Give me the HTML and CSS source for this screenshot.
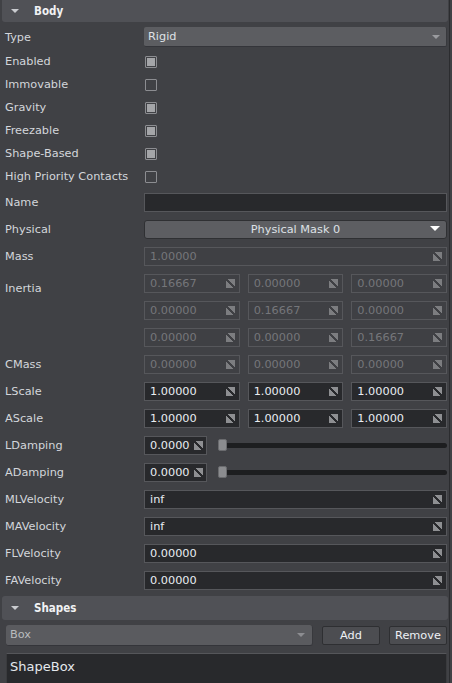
FILE: index.html
```html
<!DOCTYPE html>
<html>
<head>
<meta charset="utf-8">
<link rel="stylesheet" href="styles.css">
</head>
<body>
<div class="panel">
  <div class="section-header header-body"><span class="caret"></span>Body</div>

  <div class="row row-combo">
    <span class="label">Type</span>
    <div class="combo">Rigid<span class="combo-arrow"></span></div>
  </div>

  <div class="checks">
    <div class="row row-check"><span class="label">Enabled</span><span class="check on"></span></div>
    <div class="row row-check"><span class="label">Immovable</span><span class="check"></span></div>
    <div class="row row-check"><span class="label">Gravity</span><span class="check on"></span></div>
    <div class="row row-check"><span class="label">Freezable</span><span class="check on"></span></div>
    <div class="row row-check"><span class="label">Shape-Based</span><span class="check on"></span></div>
    <div class="row row-check"><span class="label">High Priority Contacts</span><span class="check"></span></div>
  </div>

  <div class="fields">
    <div class="row row-field"><span class="label">Name</span><div class="field edit"></div></div>
    <div class="row row-field"><span class="label">Physical</span><div class="dropbtn">Physical Mask 0<span class="white-arrow"></span></div></div>
    <div class="row row-field"><span class="label">Mass</span><div class="field disabled"><span class="val">1.00000</span><span class="spin"></span></div></div>
    <div class="row row-field"><span class="label label-low">Inertia</span>
      <div class="triple">
        <div class="field disabled"><span class="val">0.16667</span><span class="spin"></span></div>
        <div class="field disabled"><span class="val">0.00000</span><span class="spin"></span></div>
        <div class="field disabled"><span class="val">0.00000</span><span class="spin"></span></div>
      </div>
    </div>
    <div class="row row-field"><span class="label"></span>
      <div class="triple">
        <div class="field disabled"><span class="val">0.00000</span><span class="spin"></span></div>
        <div class="field disabled"><span class="val">0.16667</span><span class="spin"></span></div>
        <div class="field disabled"><span class="val">0.00000</span><span class="spin"></span></div>
      </div>
    </div>
    <div class="row row-field"><span class="label"></span>
      <div class="triple">
        <div class="field disabled"><span class="val">0.00000</span><span class="spin"></span></div>
        <div class="field disabled"><span class="val">0.00000</span><span class="spin"></span></div>
        <div class="field disabled"><span class="val">0.16667</span><span class="spin"></span></div>
      </div>
    </div>
    <div class="row row-field"><span class="label">CMass</span>
      <div class="triple">
        <div class="field disabled"><span class="val">0.00000</span><span class="spin"></span></div>
        <div class="field disabled"><span class="val">0.00000</span><span class="spin"></span></div>
        <div class="field disabled"><span class="val">0.00000</span><span class="spin"></span></div>
      </div>
    </div>
    <div class="row row-field"><span class="label">LScale</span>
      <div class="triple">
        <div class="field edit"><span class="val">1.00000</span><span class="spin"></span></div>
        <div class="field edit"><span class="val">1.00000</span><span class="spin"></span></div>
        <div class="field edit"><span class="val">1.00000</span><span class="spin"></span></div>
      </div>
    </div>
    <div class="row row-field"><span class="label">AScale</span>
      <div class="triple">
        <div class="field edit"><span class="val">1.00000</span><span class="spin"></span></div>
        <div class="field edit"><span class="val">1.00000</span><span class="spin"></span></div>
        <div class="field edit"><span class="val">1.00000</span><span class="spin"></span></div>
      </div>
    </div>
    <div class="row row-field"><span class="label">LDamping</span>
      <div class="damp">
        <div class="field edit small"><span class="val">0.0000</span><span class="spin"></span></div>
        <div class="slider"><span class="track"></span><span class="handle"></span></div>
      </div>
    </div>
    <div class="row row-field"><span class="label">ADamping</span>
      <div class="damp">
        <div class="field edit small"><span class="val">0.0000</span><span class="spin"></span></div>
        <div class="slider"><span class="track"></span><span class="handle"></span></div>
      </div>
    </div>
    <div class="row row-field"><span class="label">MLVelocity</span><div class="field edit"><span class="val">inf</span><span class="spin"></span></div></div>
    <div class="row row-field"><span class="label">MAVelocity</span><div class="field edit"><span class="val">inf</span><span class="spin"></span></div></div>
    <div class="row row-field"><span class="label">FLVelocity</span><div class="field edit"><span class="val">0.00000</span><span class="spin"></span></div></div>
    <div class="row row-field"><span class="label">FAVelocity</span><div class="field edit"><span class="val">0.00000</span><span class="spin"></span></div></div>
  </div>

  <div class="section-header header-shapes"><span class="caret"></span>Shapes</div>

  <div class="shape-bar">
    <div class="combo shape-combo">Box<span class="combo-arrow"></span></div>
    <div class="btn">Add</div>
    <div class="btn">Remove</div>
  </div>

  <div class="textarea">ShapeBox</div>
</div>
</body>
</html>
```

FILE: styles.css
```css
html, body {
  margin: 0;
  padding: 0;
  background: #404145;
  height: 100%;
  overflow: hidden;
}

.panel {
  width: 449px;
  height: 683px;
  border-right: 1px solid #2b2c2f;
  background: #404145;
  font-family: "DejaVu Sans", "Liberation Sans", sans-serif;
  font-size: 11.3px;
  color: #d3d6db;
  display: flex;
  flex-direction: column;
  overflow: hidden;
}

.section-header {
  margin-left: 2px;
  margin-right: 1px;
  background: #505156;
  border-radius: 0 0 3px 3px;
  display: flex;
  align-items: center;
  font-family: "DejaVu Sans Condensed", "DejaVu Sans", sans-serif;
  font-weight: bold;
  font-size: 11.5px;
  color: #f1f2f4;
  flex-shrink: 0;
}

.header-body {
  height: 22px;
}

.header-shapes {
  height: 24px;
  margin-top: 2px;
  border-radius: 3px;
}

.caret {
  width: 0;
  height: 0;
  border-left: 4px solid transparent;
  border-right: 4px solid transparent;
  border-top: 4px solid #c9cbcf;
  margin-left: 9px;
  margin-right: 15px;
}

.row {
  display: flex;
  align-items: center;
  padding-left: 5px;
  padding-right: 2px;
  flex-shrink: 0;
}

.label {
  width: 139px;
  flex-shrink: 0;
  white-space: nowrap;
}

.label-low {
  padding-top: 10px;
}

.row-combo {
  height: 22px;
  margin-top: 4px;
}

.combo {
  flex: 1;
  height: 20px;
  box-sizing: border-box;
  background: #5c5d61;
  border-radius: 2px;
  border-bottom: 1px solid #34353a;
  border-right: 1px solid #38393d;
  display: flex;
  align-items: center;
  padding-left: 4px;
  color: #dfe2e6;
  position: relative;
}

.combo-arrow {
  position: absolute;
  right: 6px;
  top: 8px;
  width: 0;
  height: 0;
  border-left: 4px solid transparent;
  border-right: 4px solid transparent;
  border-top: 4px solid #9a9b9f;
}

.checks {
  margin-top: 2px;
  display: flex;
  flex-direction: column;
}

.row-check {
  height: 23px;
}

.check {
  width: 12px;
  height: 12px;
  box-sizing: border-box;
  border: 1px solid #8c8d91;
  border-radius: 1px;
  margin-left: 1px;
  margin-top: 1px;
  background: #404145;
  position: relative;
}

.check.on::after {
  content: "";
  position: absolute;
  left: 1px;
  top: 1px;
  width: 8px;
  height: 8px;
  background: #a4a5a8;
}

.fields {
  margin-top: 1px;
  display: flex;
  flex-direction: column;
}

.row-field {
  height: 27px;
}

.field {
  flex: 1;
  height: 19px;
  box-sizing: border-box;
  border: 1px solid #56575b;
  display: flex;
  align-items: center;
  padding-left: 5px;
  padding-right: 4px;
  min-width: 0;
}

.field.edit {
  background: #28292c;
  color: #e9edf2;
}

.field.disabled {
  background: #3f4044;
  color: #75767a;
}

.val {
  flex: 1;
  white-space: nowrap;
}

.spin {
  width: 9px;
  height: 9px;
  flex-shrink: 0;
  background:
    linear-gradient(45deg, #8e8f92 0 40%, transparent 40% 60%, #8e8f92 60% 100%);
}

.field.disabled .spin {
  background:
    linear-gradient(45deg, #7c7d80 0 40%, transparent 40% 60%, #7c7d80 60% 100%);
}

.triple {
  flex: 1;
  display: grid;
  grid-template-columns: 1fr 1fr 1fr;
  column-gap: 8px;
}

.dropbtn {
  flex: 1;
  height: 19px;
  box-sizing: border-box;
  background: #5d5e62;
  border: 1px solid #2f3033;
  border-radius: 3px;
  display: flex;
  align-items: center;
  justify-content: center;
  color: #dde1e6;
  position: relative;
}

.white-arrow {
  position: absolute;
  right: 6px;
  top: 5px;
  width: 0;
  height: 0;
  border-left: 5px solid transparent;
  border-right: 5px solid transparent;
  border-top: 5px solid #ffffff;
}

.damp {
  flex: 1;
  display: flex;
  align-items: center;
}

.field.small {
  flex: 0 0 63px;
  padding-left: 5px;
  padding-right: 3px;
}

.slider {
  flex: 1;
  height: 19px;
  margin-left: 11px;
  position: relative;
  display: flex;
  align-items: center;
}

.track {
  flex: 1;
  height: 5px;
  background: #1d1e20;
  border-radius: 3px;
}

.handle {
  position: absolute;
  left: 0;
  top: 3px;
  width: 9px;
  height: 12px;
  background: #8b8c8f;
  border: 1px solid #6a6b6e;
  box-sizing: border-box;
  border-radius: 2px;
}

.shape-bar {
  display: flex;
  align-items: center;
  padding: 0 2px 0 6px;
  height: 22px;
  margin-top: 4px;
  flex-shrink: 0;
}

.shape-combo {
  flex: 0 0 307px;
  height: 21px;
  color: #b9bbbe;
  background: #5a5b5f;
  border-radius: 3px;
  padding-left: 4px;
  margin-right: 9px;
}

.shape-combo .combo-arrow {
  top: 8px;
  right: 7px;
  border-top-color: #8c8d91;
}

.btn {
  height: 19px;
  width: 58px;
  box-sizing: border-box;
  background: #4c4d51;
  border: 1px solid #2e2f32;
  border-radius: 2px;
  display: flex;
  align-items: center;
  justify-content: center;
  color: #eef1f5;
}

.btn + .btn {
  margin-left: 9px;
}

.textarea {
  margin: 7px 2px 0 6px;
  flex: 1;
  background: #28292c;
  border-top: 1px solid #55565a;
  border-left: 1px solid #3a3b3e;
  border-right: 1px solid #3a3b3e;
  font-size: 13px;
  color: #e4e8ed;
  padding: 5px 0 0 3px;
}
```
